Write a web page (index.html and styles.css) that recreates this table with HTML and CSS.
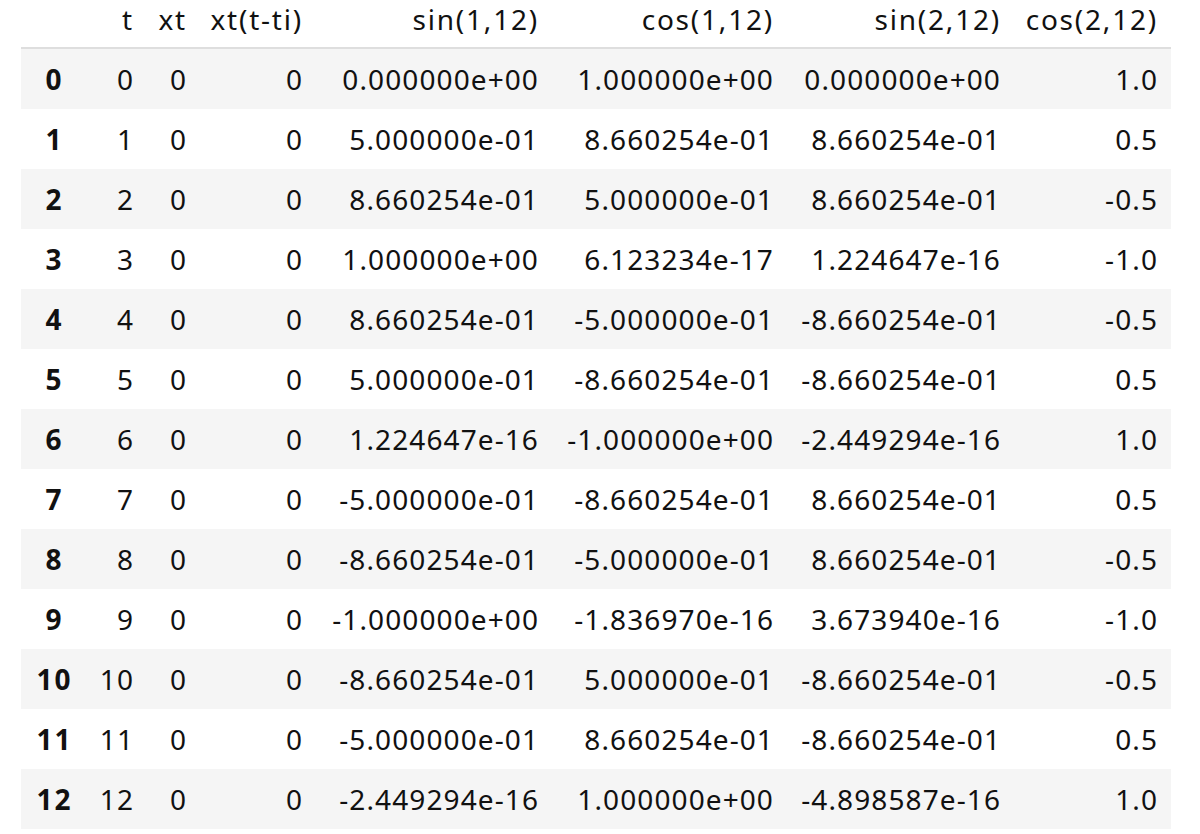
FILE: index.html
```html
<!DOCTYPE html>
<html>
<head>
<meta charset="utf-8">
<link rel="stylesheet" href="styles.css">
</head>
<body>
<table class="df">
  <colgroup>
    <col class="c-idx"><col class="c-t"><col class="c-xt"><col class="c-xtt">
    <col class="c-s1"><col class="c-c1"><col class="c-s2"><col class="c-c2">
  </colgroup>
  <thead>
    <tr><th class="idx"></th><th>t</th><th>xt</th><th>xt(t-ti)</th><th>sin(1,12)</th><th>cos(1,12)</th><th>sin(2,12)</th><th>cos(2,12)</th></tr>
  </thead>
  <tbody>
    <tr><th>0</th><td>0</td><td>0</td><td>0</td><td>0.000000e+00</td><td>1.000000e+00</td><td>0.000000e+00</td><td>1.0</td></tr>
    <tr><th>1</th><td>1</td><td>0</td><td>0</td><td>5.000000e-01</td><td>8.660254e-01</td><td>8.660254e-01</td><td>0.5</td></tr>
    <tr><th>2</th><td>2</td><td>0</td><td>0</td><td>8.660254e-01</td><td>5.000000e-01</td><td>8.660254e-01</td><td>-0.5</td></tr>
    <tr><th>3</th><td>3</td><td>0</td><td>0</td><td>1.000000e+00</td><td>6.123234e-17</td><td>1.224647e-16</td><td>-1.0</td></tr>
    <tr><th>4</th><td>4</td><td>0</td><td>0</td><td>8.660254e-01</td><td>-5.000000e-01</td><td>-8.660254e-01</td><td>-0.5</td></tr>
    <tr><th>5</th><td>5</td><td>0</td><td>0</td><td>5.000000e-01</td><td>-8.660254e-01</td><td>-8.660254e-01</td><td>0.5</td></tr>
    <tr><th>6</th><td>6</td><td>0</td><td>0</td><td>1.224647e-16</td><td>-1.000000e+00</td><td>-2.449294e-16</td><td>1.0</td></tr>
    <tr><th>7</th><td>7</td><td>0</td><td>0</td><td>-5.000000e-01</td><td>-8.660254e-01</td><td>8.660254e-01</td><td>0.5</td></tr>
    <tr><th>8</th><td>8</td><td>0</td><td>0</td><td>-8.660254e-01</td><td>-5.000000e-01</td><td>8.660254e-01</td><td>-0.5</td></tr>
    <tr><th>9</th><td>9</td><td>0</td><td>0</td><td>-1.000000e+00</td><td>-1.836970e-16</td><td>3.673940e-16</td><td>-1.0</td></tr>
    <tr><th>10</th><td>10</td><td>0</td><td>0</td><td>-8.660254e-01</td><td>5.000000e-01</td><td>-8.660254e-01</td><td>-0.5</td></tr>
    <tr><th>11</th><td>11</td><td>0</td><td>0</td><td>-5.000000e-01</td><td>8.660254e-01</td><td>-8.660254e-01</td><td>0.5</td></tr>
    <tr><th>12</th><td>12</td><td>0</td><td>0</td><td>-2.449294e-16</td><td>1.000000e+00</td><td>-4.898587e-16</td><td>1.0</td></tr>
  </tbody>
</table>
</body>
</html>
```
FILE: styles.css
```css
html, body {
  margin: 0;
  padding: 0;
  background: #ffffff;
}
body {
  font-family: "Noto Sans", "Open Sans", sans-serif;
  font-size: 28px;
  letter-spacing: 1.1px;
  color: #111111;
}
.df {
  margin-left: 21px;
  width: 1150px;
  table-layout: fixed;
  border-collapse: collapse;
  border-spacing: 0;
}
.c-idx { width: 67px; }
.c-t { width: 57px; }
.c-xt { width: 53px; }
.c-xtt { width: 116px; }
.c-s1 { width: 236px; }
.c-c1 { width: 235px; }
.c-s2 { width: 227px; }
.c-c2 { width: 159px; }

.df thead th {
  height: 48px;
  padding: 0 11px 9px 0;
  font-weight: normal;
  text-align: right;
  vertical-align: middle;
  white-space: nowrap;
  border-bottom: 2px solid #dedede;
  box-sizing: border-box;
  letter-spacing: 1.8px;
}
.df thead th:last-child { padding-right: 13px; }
.df tbody td, .df tbody th {
  height: 60px;
  padding: 0 11px 0 0;
  text-align: right;
  vertical-align: middle;
  white-space: nowrap;
  font-weight: normal;
}
.df tbody td:last-child { padding-right: 13px; }
.df tbody th {
  text-align: center;
  padding: 0;
  font-weight: bold;
  letter-spacing: 2px;
}
.df tbody tr:nth-child(odd) { background: #f5f5f5; }
```
